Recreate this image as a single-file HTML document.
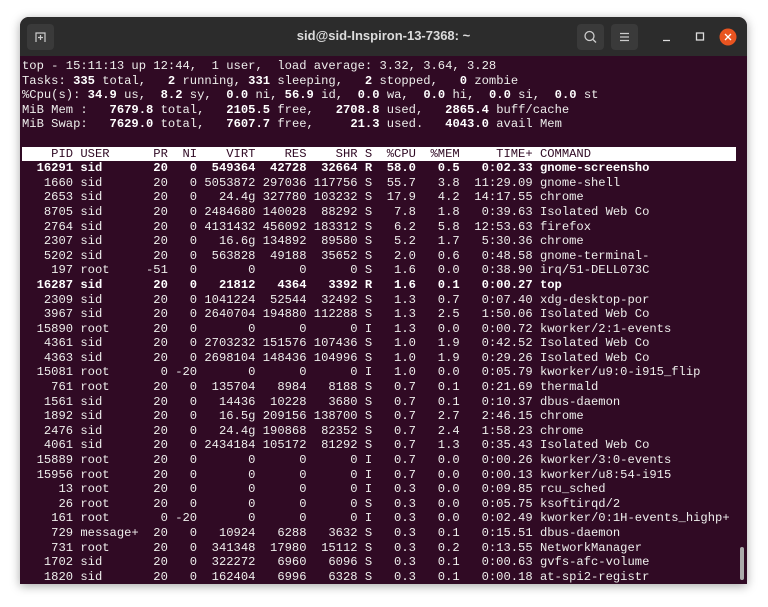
<!DOCTYPE html>
<html><head><meta charset="utf-8"><style>
html,body{margin:0;padding:0;background:#fff;width:768px;height:607px;overflow:hidden}
.win{position:absolute;left:20px;top:17px;width:727px;height:567px;background:#300a24;border-radius:9px 9px 0 0;box-shadow:0 2px 10px rgba(0,0,0,.35);overflow:hidden}
.tb{position:absolute;left:0;top:0;width:727px;height:39px;background:#2c2c2c}
.btn{position:absolute;top:7px;width:27px;height:26px;background:#3a3a3a;border-radius:4px}
.title{position:absolute;left:0;width:727px;top:11px;text-align:center;color:#dcdcdc;font:bold 13px "Liberation Sans",sans-serif}
pre{position:absolute;left:2px;top:42px;margin:0;font-family:"Liberation Mono",monospace;font-size:12.17px;line-height:14.59px;color:#eeeeec}
b{font-weight:bold;color:#fff}
.hd{background:#fff;color:#300a24;display:inline-block;width:714px}
.sb{position:absolute;left:720px;top:530px;width:4px;height:33px;background:#aaa;border-radius:2px}
</style></head><body>
<div class="win">
<div class="tb">
 <div class="btn" style="left:7px"><svg width="27" height="26"><path d="M9 18V9h9v9M13.5 11v5M11 13.5h5" stroke="#ccc" stroke-width="1.2" fill="none"/></svg></div>
 <div class="title">sid@sid-Inspiron-13-7368: ~</div>
 <div class="btn" style="left:557px"><svg width="27" height="26"><circle cx="12.5" cy="12" r="4.5" stroke="#ccc" stroke-width="1.3" fill="none"/><path d="M16 15.5l3 3" stroke="#ccc" stroke-width="1.3"/></svg></div>
 <div class="btn" style="left:591px"><svg width="27" height="26"><path d="M9 9.5h9M9 13h9M9 16.5h9" stroke="#ccc" stroke-width="1.2"/></svg></div>
 <svg style="position:absolute;left:636px;top:10px" width="90" height="20"><path d="M7 13.5h7" stroke="#ddd" stroke-width="1.3"/><rect x="40.5" y="6" width="7" height="7" stroke="#ddd" stroke-width="1.3" fill="none"/><circle cx="72" cy="10" r="8.5" fill="#e95420"/><path d="M69 7l6 6M75 7l-6 6" stroke="#fff" stroke-width="1.3"/></svg>
</div>
<pre>top - 15:11:13 up 12:44,  1 user,  load average: 3.32, 3.64, 3.28
Tasks: <b>335</b> total,   <b>2</b> running, <b>331</b> sleeping,   <b>2</b> stopped,   <b>0</b> zombie
%Cpu(s): <b>34.9</b> us,  <b>8.2</b> sy,  <b>0.0</b> ni, <b>56.9</b> id,  <b>0.0</b> wa,  <b>0.0</b> hi,  <b>0.0</b> si,  <b>0.0</b> st
MiB Mem :   <b>7679.8</b> total,   <b>2105.5</b> free,   <b>2708.8</b> used,   <b>2865.4</b> buff/cache
MiB Swap:   <b>7629.0</b> total,   <b>7607.7</b> free,     <b>21.3</b> used.   <b>4043.0</b> avail Mem

<span class="hd">    PID USER      PR  NI    VIRT    RES    SHR S  %CPU  %MEM     TIME+ COMMAND</span>
<b>  16291 sid       20   0  549364  42728  32664 R  58.0   0.5   0:02.33 gnome-screensho</b>
   1660 sid       20   0 5053872 297036 117756 S  55.7   3.8  11:29.09 gnome-shell
   2653 sid       20   0   24.4g 327780 103232 S  17.9   4.2  14:17.55 chrome
   8705 sid       20   0 2484680 140028  88292 S   7.8   1.8   0:39.63 Isolated Web Co
   2764 sid       20   0 4131432 456092 183312 S   6.2   5.8  12:53.63 firefox
   2307 sid       20   0   16.6g 134892  89580 S   5.2   1.7   5:30.36 chrome
   5202 sid       20   0  563828  49188  35652 S   2.0   0.6   0:48.58 gnome-terminal-
    197 root     -51   0       0      0      0 S   1.6   0.0   0:38.90 irq/51-DELL073C
<b>  16287 sid       20   0   21812   4364   3392 R   1.6   0.1   0:00.27 top</b>
   2309 sid       20   0 1041224  52544  32492 S   1.3   0.7   0:07.40 xdg-desktop-por
   3967 sid       20   0 2640704 194880 112288 S   1.3   2.5   1:50.06 Isolated Web Co
  15890 root      20   0       0      0      0 I   1.3   0.0   0:00.72 kworker/2:1-events
   4361 sid       20   0 2703232 151576 107436 S   1.0   1.9   0:42.52 Isolated Web Co
   4363 sid       20   0 2698104 148436 104996 S   1.0   1.9   0:29.26 Isolated Web Co
  15081 root       0 -20       0      0      0 I   1.0   0.0   0:05.79 kworker/u9:0-i915_flip
    761 root      20   0  135704   8984   8188 S   0.7   0.1   0:21.69 thermald
   1561 sid       20   0   14436  10228   3680 S   0.7   0.1   0:10.37 dbus-daemon
   1892 sid       20   0   16.5g 209156 138700 S   0.7   2.7   2:46.15 chrome
   2476 sid       20   0   24.4g 190868  82352 S   0.7   2.4   1:58.23 chrome
   4061 sid       20   0 2434184 105172  81292 S   0.7   1.3   0:35.43 Isolated Web Co
  15889 root      20   0       0      0      0 I   0.7   0.0   0:00.26 kworker/3:0-events
  15956 root      20   0       0      0      0 I   0.7   0.0   0:00.13 kworker/u8:54-i915
     13 root      20   0       0      0      0 I   0.3   0.0   0:09.85 rcu_sched
     26 root      20   0       0      0      0 S   0.3   0.0   0:05.75 ksoftirqd/2
    161 root       0 -20       0      0      0 I   0.3   0.0   0:02.49 kworker/0:1H-events_highp+
    729 message+  20   0   10924   6288   3632 S   0.3   0.1   0:15.51 dbus-daemon
    731 root      20   0  341348  17980  15112 S   0.3   0.2   0:13.55 NetworkManager
   1702 sid       20   0  322272   6960   6096 S   0.3   0.1   0:00.63 gvfs-afc-volume
   1820 sid       20   0  162404   6996   6328 S   0.3   0.1   0:00.18 at-spi2-registr</pre>
<div class="sb"></div>
</div>
</body></html>
